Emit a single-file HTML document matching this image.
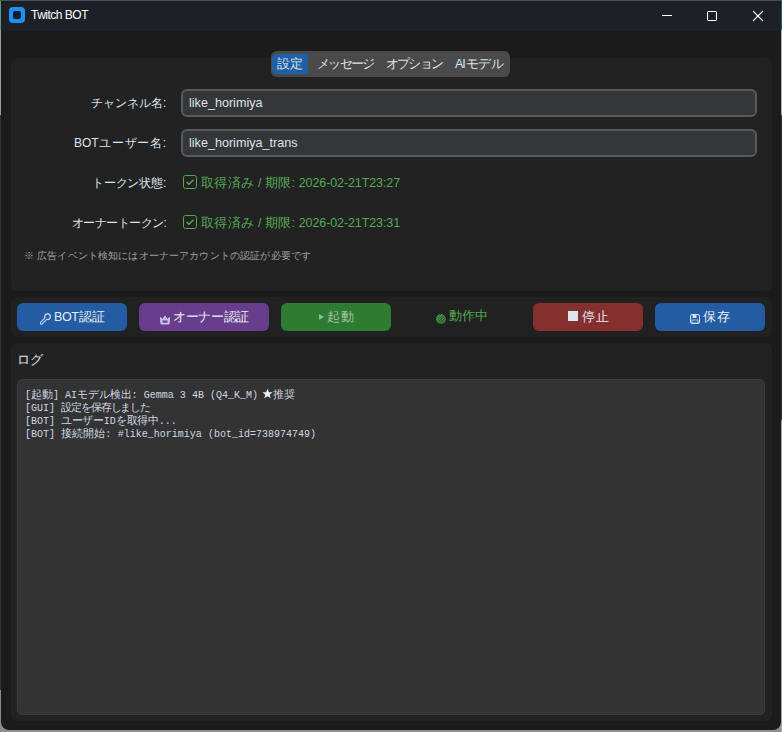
<!DOCTYPE html>
<html lang="ja">
<head>
<meta charset="utf-8">
<title>Twitch BOT</title>
<style>
*{box-sizing:border-box;margin:0;padding:0}
html,body{width:782px;height:732px;overflow:hidden;background:#8a8f94}
body{font-family:"Liberation Sans",sans-serif;position:relative;color:#dce4ee}
.abs{position:absolute;white-space:nowrap}
.t{position:absolute;white-space:nowrap;text-align:justify;text-align-last:justify;overflow:visible}
#win{position:absolute;left:1px;top:0;width:780px;height:730px;background:#1b1b1b;border-radius:0 0 8px 8px}
#lc{position:absolute;left:0;top:0;width:1px;height:732px;background:linear-gradient(#5a9a8a 0,#5a9a8a 30px,#9a9a9a 30px,#9a9a9a 115px,#333 115px,#333 690px,#8a8a8a 690px)}
#rc{position:absolute;left:781px;top:0;width:1px;height:732px;background:linear-gradient(#2a5a80 0,#2a5a80 30px,#b0b0b0 30px,#b0b0b0 115px,#333 115px,#333 420px,#a8a8a8 420px)}
#topline{position:absolute;left:0;top:0;width:782px;height:1px;background:#4a5256}
#title{position:absolute;left:1px;top:1px;width:780px;height:30px;background:#1e2027;border-radius:8px 8px 0 0}
.frame{position:absolute;left:11px;width:761px;background:#222222;border-radius:6px}
.entry{position:absolute;left:181px;width:576px;height:28px;background:#343638;border:2px solid #565b5e;border-radius:6px;font-size:12.6px;color:#dce4ee;padding-left:6px;line-height:24px;white-space:nowrap}
.lbl{font-size:12px;color:#dce4ee;line-height:14px}
.btn{position:absolute;top:303px;height:28px;border-radius:6px}
.bt{top:310px;font-size:13px;line-height:14px;color:#e8eef5}
.seg{top:57px;font-size:12.5px;line-height:14px;color:#dce4ee}
.stat{left:201px;width:199px;letter-spacing:-0.1px;font-size:12.5px;color:#55ab55;line-height:14px}
.chk{position:absolute;left:183px;width:14px;height:14px;border:1.5px solid #52a852;border-radius:2.5px}
#log{position:absolute;left:17px;top:379px;width:748px;height:336px;background:#333333;border:1px solid #3b3b3b;border-radius:5px}
.ll{left:25px;font-family:"Liberation Mono",monospace;font-size:10px;line-height:13px;color:#cfd9e3}
.cj{font-family:"Liberation Sans",sans-serif;font-size:10.5px;letter-spacing:-0.3px}
</style>
</head>
<body>
<div id="win"></div><div id="lc"></div><div id="rc"></div>
<div id="topline"></div>
<div id="title">
  <div class="abs" style="left:8px;top:6px;width:16px;height:16px;background:#1e90f0;border-radius:4px"></div>
  <div class="abs" style="left:12px;top:10px;width:8px;height:8px;background:#0f1c30;border-radius:2px"></div>
  <div class="abs" style="left:30px;top:7px;font-size:12px;letter-spacing:-0.5px;color:#ffffff;line-height:14px">Twitch BOT</div>
  <div class="abs" style="left:661px;top:14px;width:10px;height:1px;background:#fff"></div>
  <div class="abs" style="left:706px;top:10px;width:10px;height:10px;border:1px solid #fff;border-radius:1px"></div>
  <svg class="abs" style="left:751px;top:9px" width="12" height="12" viewBox="0 0 12 12"><path d="M1 1L11 11M11 1L1 11" stroke="#fff" stroke-width="1.1"/></svg>
</div>

<div class="frame" style="top:58px;height:233px"></div>
<div class="frame" style="top:297px;height:40px;background:#212121"></div>

<!-- segmented tabs -->
<div class="abs" style="left:271px;top:51px;width:239px;height:26px;background:#4a4a4a;border-radius:6px"></div>
<div class="abs" style="left:272px;top:54px;width:36px;height:20px;background:#1f5fa3;border-radius:5px 1px 1px 5px"></div>
<div class="t seg" style="left:277px;width:26px">設定</div>
<div class="t seg" style="left:317px;width:56px;letter-spacing:-2.2px">メッセージ</div>
<div class="t seg" style="left:386px;width:55px;letter-spacing:-2.8px">オプション</div>
<div class="t seg" style="left:455px;width:48px;letter-spacing:-1px">AIモデル</div>

<!-- form -->
<div class="t lbl" style="left:91px;width:75px;top:96px;letter-spacing:-0.4px">チャンネル名:</div>
<div class="entry" style="top:89px">like_horimiya</div>
<div class="t lbl" style="left:74px;width:92px;top:136px">BOTユーザー名:</div>
<div class="entry" style="top:129px">like_horimiya_trans</div>

<div class="t lbl" style="left:92px;width:74px;top:176px;letter-spacing:-0.3px">トークン状態:</div>
<div class="chk" style="top:175px"></div>
<svg class="abs" style="left:183px;top:175px" width="14" height="14" viewBox="0 0 14 14"><path d="M3.5 7L6 9.3L10.5 4.8" stroke="#52a852" stroke-width="1.5" fill="none"/></svg>
<div class="t stat" style="top:176px">取得済み / 期限: 2026-02-21T23:27</div>

<div class="t lbl" style="left:72px;width:94px;top:216px;letter-spacing:-0.9px">オーナートークン:</div>
<div class="chk" style="top:215px"></div>
<svg class="abs" style="left:183px;top:215px" width="14" height="14" viewBox="0 0 14 14"><path d="M3.5 7L6 9.3L10.5 4.8" stroke="#52a852" stroke-width="1.5" fill="none"/></svg>
<div class="t stat" style="top:216px">取得済み / 期限: 2026-02-21T23:31</div>

<div class="t" style="left:24px;width:287px;top:250px;font-size:10px;color:#a0a0a0;line-height:12px">※ 広告イベント検知にはオーナーアカウントの認証が必要です</div>

<!-- buttons -->
<div class="btn" style="left:17px;width:110px;background:#235ca2"></div>
<svg class="abs" style="left:39px;top:313px" width="13" height="13" viewBox="0 0 13 13"><path d="M7 5.5L2.5 10" stroke="#c6dcf4" stroke-width="3.2" stroke-linecap="round"/><circle cx="8.5" cy="3.7" r="3.4" fill="#c6dcf4"/><path d="M7 5.5L2.5 10" stroke="#235ca2" stroke-width="1.2" stroke-linecap="round"/><circle cx="8.5" cy="3.7" r="2.2" fill="#2f5e9a"/></svg>
<div class="t bt" style="left:54px;width:51px;font-size:12.5px;letter-spacing:-0.4px">BOT認証</div>

<div class="btn" style="left:139px;width:130px;background:#683d8c"></div>
<svg class="abs" style="left:159px;top:315px" width="12" height="10" viewBox="0 0 12 10"><path d="M1.5 2.5L3.8 4.5L6 1L8.2 4.5L10.5 2.5L10 9H2Z" fill="#bfb8e6" stroke="#d6d2f2" stroke-width="0.9" stroke-linejoin="round"/><rect x="3.5" y="5.5" width="5" height="2.2" fill="#6a4a9a"/></svg>
<div class="t bt" style="left:173px;width:75px;letter-spacing:-1.2px">オーナー認証</div>

<div class="btn" style="left:281px;width:110px;background:#2e7b32"></div>
<svg class="abs" style="left:319px;top:314px" width="6" height="6" viewBox="0 0 6 6"><path d="M0 0L5 3L0 6Z" fill="#9cb49c"/></svg>
<div class="t bt" style="left:327px;width:27px;color:#aac0aa">起動</div>

<div class="abs" style="left:436px;top:314px;width:10px;height:10px;border-radius:50%;background:repeating-linear-gradient(135deg,#449044 0 1px,#2c662c 1px 2px)"></div>
<div class="t bt" style="left:449px;top:309px;width:39px;color:#52a852">動作中</div>

<div class="btn" style="left:533px;width:110px;background:#852f2f"></div>
<div class="abs" style="left:568px;top:311px;width:10px;height:10px;background:#d8e6ee"></div>
<div class="t bt" style="left:582px;width:27px">停止</div>

<div class="btn" style="left:655px;width:110px;background:#235ca2"></div>
<svg class="abs" style="left:690px;top:314px" width="10" height="10" viewBox="0 0 10 10"><rect x="0.5" y="0.5" width="9" height="9" rx="1.5" fill="none" stroke="#cfe0f5"/><rect x="2.5" y="1" width="4" height="3" fill="#cfe0f5"/><rect x="2" y="6" width="6" height="3" fill="none" stroke="#cfe0f5" stroke-width="0.8"/></svg>
<div class="t bt" style="left:703px;width:27px">保存</div>

<!-- log -->
<div class="frame" style="top:343px;height:378px"></div>
<div class="t" style="left:17px;width:25px;top:353px;font-size:12.5px;letter-spacing:-1.4px;line-height:14px;color:#dce4ee">ログ</div>
<div id="log"></div>
<div class="t ll" style="top:388px;width:270px">[<span class="cj">起動</span>] AI<span class="cj">モデル検出</span>: Gemma 3 4B (Q4_K_M) <svg width="11" height="11" viewBox="0 0 24 24" style="vertical-align:-1px;margin-left:-2px"><path d="M12 1.5L15 9.2L23 9.5L16.7 14.5L19 22.5L12 17.8L5 22.5L7.3 14.5L1 9.5L9 9.2Z" fill="#e8eef4"/></svg><span class="cj">推奨</span></div>
<div class="t ll" style="top:401px;width:125px">[GUI] <span class="cj" style="letter-spacing:-1.2px">設定を保存しました</span></div>
<div class="t ll" style="top:414px;width:150px">[BOT] <span class="cj">ユーザー</span>ID<span class="cj">を取得中</span>...</div>
<div class="t ll" style="top:427px;width:291px">[BOT] <span class="cj">接続開始</span>: #like_horimiya (bot_id=738974749)</div>
</body>
</html>
